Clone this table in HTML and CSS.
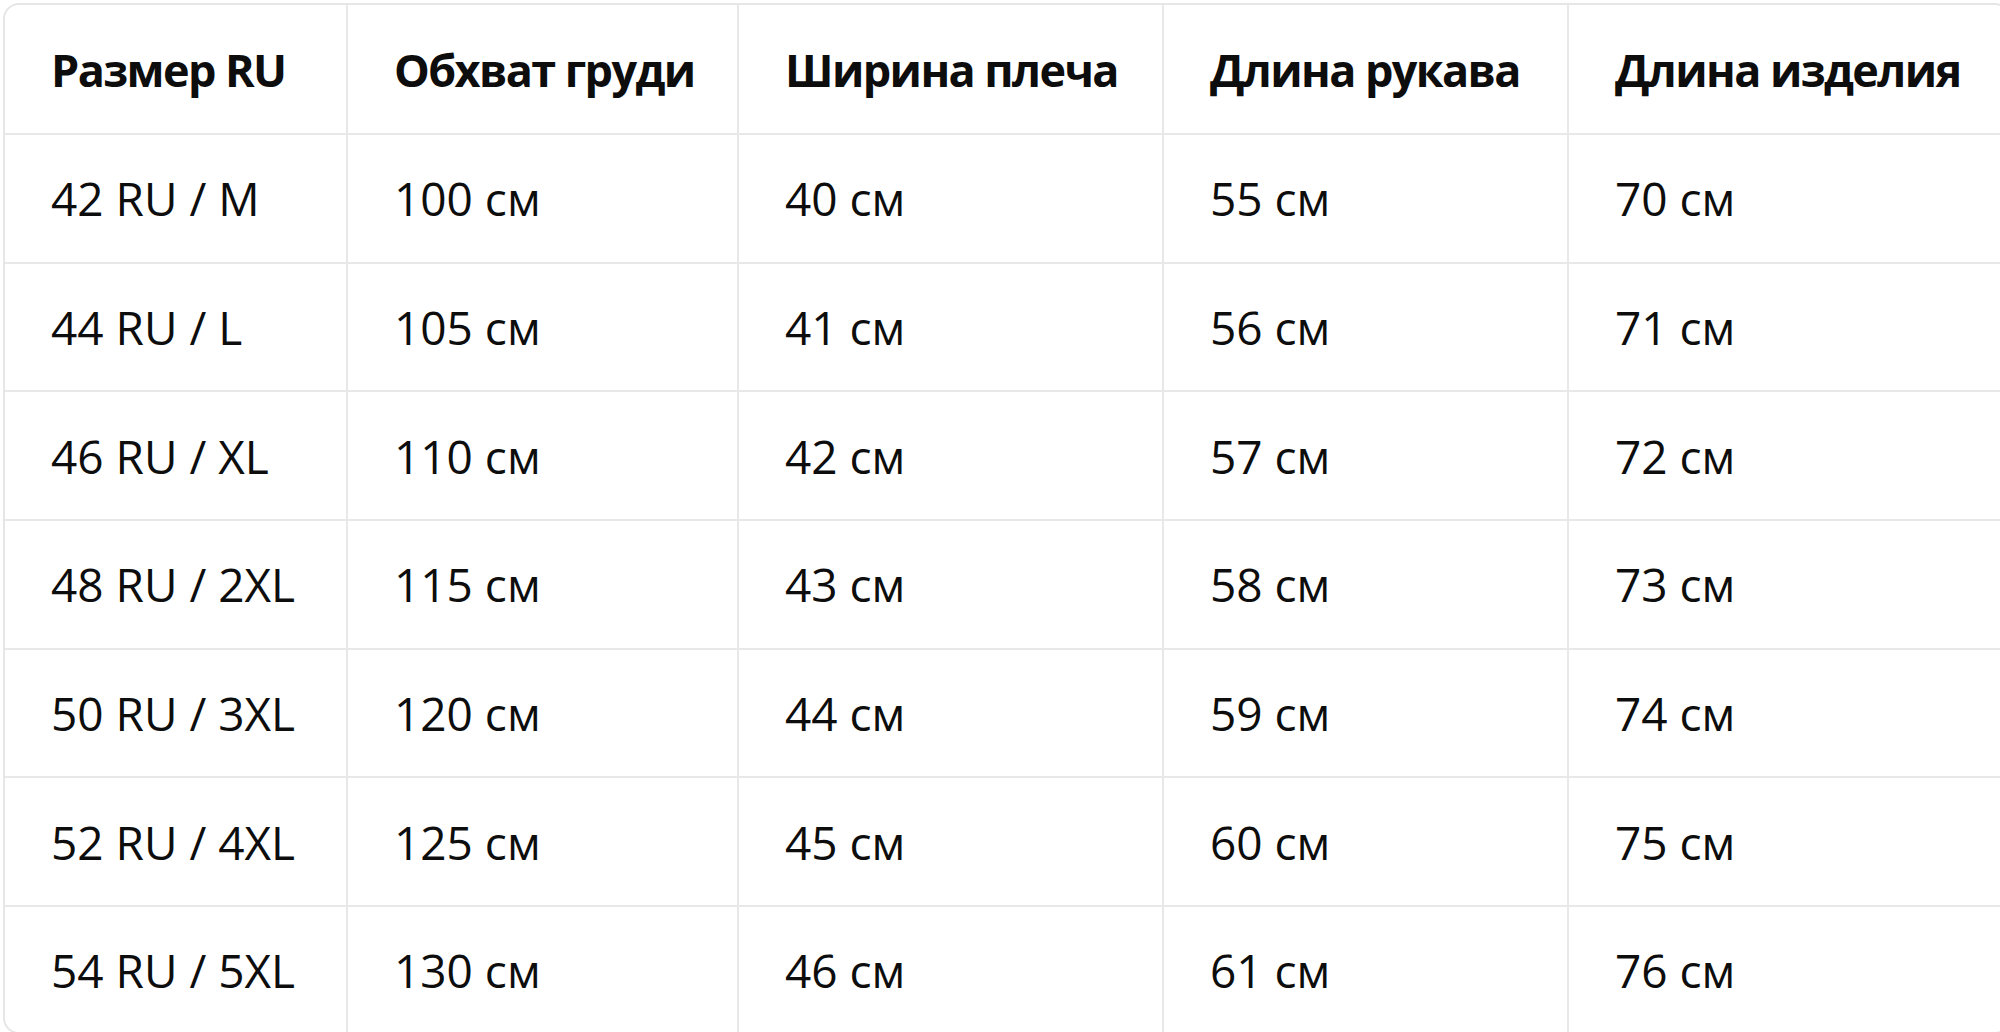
FILE: index.html
```html
<!DOCTYPE html>
<html lang="ru">
<head>
<meta charset="utf-8">
<title>Размерная сетка</title>
<link rel="stylesheet" href="styles.css">
</head>
<body>
<div class="page">
  <div class="sheet">
    <div class="cell head">Размер RU</div>
    <div class="cell head">Обхват груди</div>
    <div class="cell head">Ширина плеча</div>
    <div class="cell head">Длина рукава</div>
    <div class="cell head last-col">Длина изделия</div>

    <div class="cell">42 RU / M</div>
    <div class="cell">100 см</div>
    <div class="cell">40 см</div>
    <div class="cell">55 см</div>
    <div class="cell last-col">70 см</div>

    <div class="cell">44 RU / L</div>
    <div class="cell">105 см</div>
    <div class="cell">41 см</div>
    <div class="cell">56 см</div>
    <div class="cell last-col">71 см</div>

    <div class="cell">46 RU / XL</div>
    <div class="cell">110 см</div>
    <div class="cell">42 см</div>
    <div class="cell">57 см</div>
    <div class="cell last-col">72 см</div>

    <div class="cell">48 RU / 2XL</div>
    <div class="cell">115 см</div>
    <div class="cell">43 см</div>
    <div class="cell">58 см</div>
    <div class="cell last-col">73 см</div>

    <div class="cell">50 RU / 3XL</div>
    <div class="cell">120 см</div>
    <div class="cell">44 см</div>
    <div class="cell">59 см</div>
    <div class="cell last-col">74 см</div>

    <div class="cell">52 RU / 4XL</div>
    <div class="cell">125 см</div>
    <div class="cell">45 см</div>
    <div class="cell">60 см</div>
    <div class="cell last-col">75 см</div>

    <div class="cell last-row">54 RU / 5XL</div>
    <div class="cell last-row">130 см</div>
    <div class="cell last-row">46 см</div>
    <div class="cell last-row">61 см</div>
    <div class="cell last-row last-col">76 см</div>
  </div>
</div>
</body>
</html>
```

FILE: styles.css
```css
html, body {
  margin: 0;
  padding: 0;
  background: #ffffff;
  overflow: hidden;
}

.page {
  padding: 3px 0 0 3px;
  width: 2100px;
}

.sheet {
  display: grid;
  grid-template-columns: 343px 391px 425px 405px 440px;
  grid-template-rows: 130px repeat(6, 128.7px) 125px;
  width: max-content;
  border: 2px solid #e6e6e6;
  border-radius: 16px;
  overflow: hidden;
  background: #ffffff;
  font-family: "Open Sans", "Noto Sans", "DejaVu Sans", sans-serif;
  color: #0d0d0d;
}

.cell {
  box-sizing: border-box;
  display: flex;
  align-items: center;
  padding: 0 0 0 46px;
  border-right: 2px solid #e8e8e8;
  border-bottom: 2px solid #e8e8e8;
  font-size: 46px;
  font-weight: 400;
  white-space: nowrap;
}

.head {
  font-size: 45px;
  font-weight: 700;
  letter-spacing: -1.6px;
}

.last-col {
  border-right: none;
}

.last-row {
  border-bottom: none;
}
```
